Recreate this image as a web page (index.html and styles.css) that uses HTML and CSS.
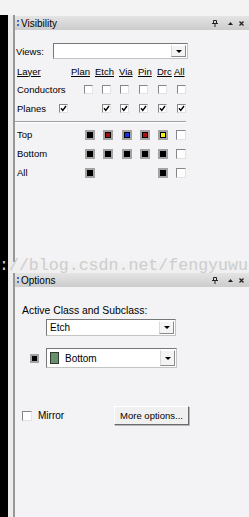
FILE: index.html
```html
<!DOCTYPE html>
<html>

<head>
    <meta charset="UTF-8">
    <title>Visibility / Options</title>
    <link rel="stylesheet" href="styles.css">
</head>

<body>
    <div class="screen">
        <div class="topbar"></div>

        <div class="main">
            <div class="strip"></div>
            <div class="gutter"></div>

            <div class="dock">
                <!-- Visibility -->
                <section class="panel panel-vis">
                    <div class="title">
                        <span class="grip"></span>
                        <span class="title-text">Visibility</span>
                        <span class="title-btns">
                            <svg class="ic-pin" width="6" height="7" viewBox="0 0 6 7"><path d="M1.5 0.5h3v3h-3z M0 3.5h6 M3 3.5v3.5" stroke="#222" fill="none"/></svg>
                            <svg class="ic-up" width="5" height="3" viewBox="0 0 5 3"><path d="M0 3h5L2.5 0z" fill="#222"/></svg>
                            <svg class="ic-close" width="5" height="5" viewBox="0 0 5 5"><path d="M0.5 0.5l4 4M4.5 0.5l-4 4" stroke="#222" stroke-width="1.3"/></svg>
                        </span>
                    </div>

                    <div class="vis-body">
                        <div class="views-row">
                            <span class="views-label">Views:</span>
                            <div class="combo combo-views">
                                <span class="combo-value"></span>
                                <span class="combo-btn"><i class="arrow"></i></span>
                            </div>
                        </div>

                        <div class="layer-head">
                            <span class="h-layer">Layer</span>
                            <span class="h-plan">Plan</span>
                            <span class="h-etch">Etch</span>
                            <span class="h-via">Via</span>
                            <span class="h-pin">Pin</span>
                            <span class="h-drc">Drc</span>
                            <span>All</span>
                        </div>

                        <div class="layer-grid">
                            <span class="row-label span2">Conductors</span>
                            <span class="cb"></span>
                            <span class="cb"></span>
                            <span class="cb"></span>
                            <span class="cb"></span>
                            <span class="cb"></span>
                            <span class="cb"></span>

                            <span class="row-label">Planes</span>
                            <span class="cb checked"><svg width="7" height="7" viewBox="0 0 7 7"><path d="M1 3.2l1.8 2.2L6 1" stroke="#000" stroke-width="1.4" fill="none"/></svg></span>
                            <span></span>
                            <span class="cb checked"><svg width="7" height="7" viewBox="0 0 7 7"><path d="M1 3.2l1.8 2.2L6 1" stroke="#000" stroke-width="1.4" fill="none"/></svg></span>
                            <span class="cb checked"><svg width="7" height="7" viewBox="0 0 7 7"><path d="M1 3.2l1.8 2.2L6 1" stroke="#000" stroke-width="1.4" fill="none"/></svg></span>
                            <span class="cb checked"><svg width="7" height="7" viewBox="0 0 7 7"><path d="M1 3.2l1.8 2.2L6 1" stroke="#000" stroke-width="1.4" fill="none"/></svg></span>
                            <span class="cb checked"><svg width="7" height="7" viewBox="0 0 7 7"><path d="M1 3.2l1.8 2.2L6 1" stroke="#000" stroke-width="1.4" fill="none"/></svg></span>
                            <span class="cb checked"><svg width="7" height="7" viewBox="0 0 7 7"><path d="M1 3.2l1.8 2.2L6 1" stroke="#000" stroke-width="1.4" fill="none"/></svg></span>
                        </div>

                        <div class="sep"></div>

                        <div class="color-grid">
                            <span class="row-label">Top</span>
                            <span class="sw"></span>
                            <span class="sw sw-darkred"></span>
                            <span class="sw sw-blue"></span>
                            <span class="sw sw-red"></span>
                            <span class="sw sw-yellow"></span>
                            <span class="cb cb-big"></span>

                            <span class="row-label">Bottom</span>
                            <span class="sw"></span>
                            <span class="sw"></span>
                            <span class="sw"></span>
                            <span class="sw"></span>
                            <span class="sw"></span>
                            <span class="cb cb-big"></span>

                            <span class="row-label">All</span>
                            <span class="sw"></span>
                            <span></span>
                            <span></span>
                            <span></span>
                            <span class="sw"></span>
                            <span class="cb cb-big"></span>
                        </div>
                    </div>
                </section>

                <div class="splitter"></div>

                <!-- Options -->
                <section class="panel panel-opt">
                    <div class="title">
                        <span class="grip"></span>
                        <span class="title-text">Options</span>
                        <span class="title-btns">
                            <svg class="ic-pin" width="6" height="7" viewBox="0 0 6 7"><path d="M1.5 0.5h3v3h-3z M0 3.5h6 M3 3.5v3.5" stroke="#222" fill="none"/></svg>
                            <svg class="ic-up" width="5" height="3" viewBox="0 0 5 3"><path d="M0 3h5L2.5 0z" fill="#222"/></svg>
                            <svg class="ic-close" width="5" height="5" viewBox="0 0 5 5"><path d="M0.5 0.5l4 4M4.5 0.5l-4 4" stroke="#222" stroke-width="1.3"/></svg>
                        </span>
                    </div>

                    <div class="opt-body">
                        <div class="opt-label">Active Class and Subclass:</div>

                        <div class="combo combo-class">
                            <span class="combo-value">Etch</span>
                            <span class="combo-btn"><i class="arrow"></i></span>
                        </div>

                        <div class="sub-row">
                            <span class="sw sw-opt"></span>
                            <div class="combo combo-sub">
                                <span class="combo-value"><i class="chip"></i>Bottom</span>
                                <span class="combo-btn"><i class="arrow"></i></span>
                            </div>
                        </div>

                        <div class="mirror-row">
                            <span class="mirror">
                                <span class="cb cb-big"></span>
                                Mirror
                            </span>
                            <button class="btn">More options...</button>
                        </div>
                    </div>
                </section>
            </div>
        </div>

        <div class="watermark">://blog.csdn.net/fengyuwu</div>
    </div>
</body>

</html>
```

FILE: styles.css
```css
body {
    margin: 0;
    background: #f2f2f2;
    font-family: "Liberation Sans", Arial, sans-serif;
    font-size: 10px;
    color: #000;
}

.screen {
    position: relative;
    width: 249px;
    height: 517px;
    overflow: hidden;
}

.topbar {
    height: 15px;
    background: #f3f3f3;
}

.main {
    display: flex;
    height: 502px;
}

.strip {
    width: 8px;
    background: #000;
}

.gutter {
    width: 5px;
    background: #ececec;
}

.dock {
    flex: 1;
    display: flex;
    flex-direction: column;
}

.panel {
    background: #f3f2f5;
    border-left: 2px solid #979797;
}

.panel-vis {
    height: 247px;
    padding-top: 1px;
    box-sizing: border-box;
}

.splitter {
    height: 11px;
    background: #f0f0f0;
}

.panel-opt {
    flex: 1;
}

/* title bar */
.title {
    display: flex;
    align-items: center;
    height: 14px;
    padding: 0 5px 0 2px;
    background: linear-gradient(#e4e4e4, #cccccc);
}

.grip {
    width: 2px;
    height: 6px;
    margin-right: 2px;
    background: linear-gradient(#3b6fd4 0, #3b6fd4 2px, transparent 2px, transparent 4px, #3b6fd4 4px);
}

.title-text {
    font-size: 10px;
}

.title-btns {
    margin-left: auto;
    display: flex;
    align-items: center;
}

.ic-up {
    margin-left: 10px;
}

.ic-close {
    margin-left: 6px;
}

/* visibility */
.vis-body {
    padding: 13px 0 0 1px;
    font-size: 9.5px;
}

.views-row {
    display: flex;
    align-items: center;
    height: 16px;
}

.views-label {
    width: 37px;
}

.combo {
    display: flex;
    box-sizing: border-box;
    background: #fff;
    border: 1px solid;
    border-color: #777 #c4c4c4 #c4c4c4 #777;
}

.combo-views {
    width: 135px;
    height: 16px;
}

.combo-value {
    flex: 1;
    display: flex;
    align-items: center;
    padding-left: 3px;
}

.combo-btn {
    width: 13px;
    margin: 1px;
    display: flex;
    align-items: center;
    justify-content: center;
    background: #f4f4f4;
    border: 1px solid;
    border-color: #fff #8a8a8a #8a8a8a #d8d8d8;
}

.arrow {
    width: 0;
    height: 0;
    border-left: 3px solid transparent;
    border-right: 3px solid transparent;
    border-top: 3px solid #000;
}

.layer-head {
    display: flex;
    align-items: center;
    height: 14px;
    margin-top: 5px;
    padding-left: 1px;
}

.layer-head span {
    text-decoration: underline;
}

.h-layer { width: 54px; }
.h-plan { width: 24px; }
.h-etch { width: 24px; }
.h-via { width: 19px; }
.h-pin { width: 19px; }
.h-drc { width: 17px; }

.layer-grid {
    display: grid;
    grid-template-columns: 43px 25px 18px 18px 19px 19px 19px 19px;
    grid-auto-rows: 19px;
    align-items: center;
    margin-top: 2px;
}

.span2 {
    grid-column: span 2;
}

.row-label {
    padding-left: 1px;
}

.cb {
    display: flex;
    align-items: center;
    justify-content: center;
    width: 9px;
    height: 9px;
    box-sizing: border-box;
    background: #fff;
    border: 1px solid;
    border-color: #868686 #e2e2e2 #e2e2e2 #868686;
}

.cb-big {
    width: 10px;
    height: 10px;
}

.sep {
    width: 171px;
    margin: 3px 0 2px -1px;
    border-top: 1px solid #a0a0a0;
    border-bottom: 1px solid #fff;
}

.color-grid {
    display: grid;
    grid-template-columns: 69px 18px 19px 18px 18px 18px 18px;
    grid-auto-rows: 19px;
    align-items: center;
}

.sw {
    width: 10px;
    height: 10px;
    box-sizing: border-box;
    border: 2px solid #a3a3a3;
    background: #000;
    box-shadow: inset 0 0 0 1px #000;
}

.sw-darkred { background: #a30d0d; }
.sw-blue { background: #1230e6; }
.sw-red { background: #b01010; }
.sw-yellow { background: #f2f20a; }

/* options */
.opt-body {
    padding: 18px 0 0 7px;
    font-size: 10px;
}

.opt-label {
    height: 12px;
    line-height: 12px;
    font-size: 10.4px;
}

.combo-class {
    width: 130px;
    height: 17px;
    margin: 2px 0 0 24px;
}

.sub-row {
    display: flex;
    align-items: center;
    margin-top: 12px;
    padding-left: 8px;
}

.sw-opt {
    width: 9px;
    height: 9px;
}

.combo-sub {
    width: 131px;
    height: 20px;
    margin-left: 7px;
}

.chip {
    width: 9px;
    height: 12px;
    box-sizing: border-box;
    margin-right: 6px;
    background: #66916b;
    border: 1px solid #2e3a2f;
}

.mirror-row {
    display: flex;
    align-items: center;
    margin-top: 38px;
}

.mirror {
    width: 92px;
    display: flex;
    align-items: center;
}

.mirror .cb {
    margin-right: 6px;
}

.btn {
    width: 75px;
    height: 19px;
    padding: 0;
    font-family: "Liberation Sans", Arial, sans-serif;
    font-size: 9.5px;
    color: #000;
    background: #f0f0f0;
    border: 1px solid;
    border-color: #fff #6a6a6a #6a6a6a #fff;
    box-shadow: 1px 1px 0 #b8b8b8;
}

.watermark {
    position: absolute;
    left: -1px;
    top: 257px;
    font-family: "Liberation Mono", monospace;
    font-size: 16.6px;
    line-height: 18px;
    color: #cdcdcd;
    white-space: nowrap;
}
```
